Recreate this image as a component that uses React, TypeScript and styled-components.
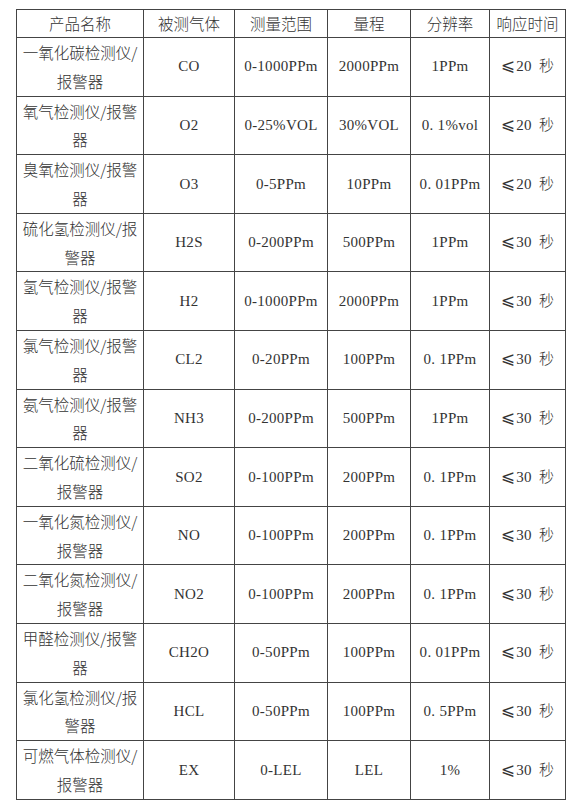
import React from "react";
import styled, { createGlobalStyle } from "styled-components";

const GlobalStyle = createGlobalStyle`
  html, body {
    margin: 0;
    padding: 0;
    background: #fff;
  }
  body {
    font-family: "Liberation Serif", "Noto Sans CJK SC", serif;
    color: #333;
  }
`;

const Page = styled.div`
  padding: 0 2px 0 16px;
  overflow: hidden;
`;

// the title sits mostly above the viewport; only its bottom edge shows
const Title = styled.p`
  margin: -18px 0 0 -8px;
  font-family: "Noto Sans CJK SC", sans-serif;
  font-size: 14px;
  font-weight: bold;
  line-height: 20px;
  color: #222;
`;

const Table = styled.table`
  margin-top: 7px;
  width: 549px;
  border-collapse: collapse;
  table-layout: fixed;
  font-size: 16px;
`;

const HeadCell = styled.th`
  border: 1px solid #444;
  padding: 0;
  height: 27px;
  line-height: 27px;
  font-weight: 300;
  font-family: "Noto Sans CJK SC", sans-serif;
  font-size: 15.5px;
  text-align: center;
  color: #333;
`;

const Cell = styled.td<{ $name?: boolean }>`
  border: 1px solid #444;
  padding: 0 1px;
  height: 57.6px;
  line-height: 28.8px;
  text-align: center;
  vertical-align: middle;
  color: #333;
  font-family: ${({ $name }) =>
    $name
      ? '"Noto Sans CJK SC", sans-serif'
      : '"Liberation Serif", "Noto Sans CJK SC", serif'};
  font-weight: ${({ $name }) => ($name ? 300 : 400)};
  font-size: ${({ $name }) => ($name ? "15.5px" : "15px")};
  letter-spacing: ${({ $name }) => ($name ? "0" : "0.3px")};
`;

const Le = styled.span`
  font-family: "DejaVu Sans", sans-serif;
  font-size: 17px;
  line-height: 1;
  margin-right: 1px;
`;

const Sec = styled.span`
  font-family: "Noto Sans CJK SC", sans-serif;
  font-weight: 300;
  line-height: 1;
  margin-left: 7px;
`;

const widths = [127, 91, 93, 83, 79, 76];
const heads = ["产品名称", "被测气体", "测量范围", "量程", "分辨率", "响应时间"];

type Row = [string, string, string, string, string, string];

const rows: Row[] = [
  ["一氧化碳检测仪/报警器", "CO", "0-1000PPm", "2000PPm", "1PPm", "20"],
  ["氧气检测仪/报警器", "O2", "0-25%VOL", "30%VOL", "0. 1%vol", "20"],
  ["臭氧检测仪/报警器", "O3", "0-5PPm", "10PPm", "0. 01PPm", "20"],
  ["硫化氢检测仪/报警器", "H2S", "0-200PPm", "500PPm", "1PPm", "30"],
  ["氢气检测仪/报警器", "H2", "0-1000PPm", "2000PPm", "1PPm", "30"],
  ["氯气检测仪/报警器", "CL2", "0-20PPm", "100PPm", "0. 1PPm", "30"],
  ["氨气检测仪/报警器", "NH3", "0-200PPm", "500PPm", "1PPm", "30"],
  ["二氧化硫检测仪/报警器", "SO2", "0-100PPm", "200PPm", "0. 1PPm", "30"],
  ["一氧化氮检测仪/报警器", "NO", "0-100PPm", "200PPm", "0. 1PPm", "30"],
  ["二氧化氮检测仪/报警器", "NO2", "0-100PPm", "200PPm", "0. 1PPm", "30"],
  ["甲醛检测仪/报警器", "CH2O", "0-50PPm", "100PPm", "0. 01PPm", "30"],
  ["氯化氢检测仪/报警器", "HCL", "0-50PPm", "100PPm", "0. 5PPm", "30"],
  ["可燃气体检测仪/报警器", "EX", "0-LEL", "LEL", "1%", "30"],
];

export default function App() {
  return (
    <Page>
      <GlobalStyle />
      <Title>二、有毒有害气体检测仪技术参数</Title>
      <Table>
        <colgroup>
          {widths.map((w, i) => (
            <col key={i} style={{ width: w }} />
          ))}
        </colgroup>
        <thead>
          <tr>
            {heads.map((h) => (
              <HeadCell key={h}>{h}</HeadCell>
            ))}
          </tr>
        </thead>
        <tbody>
          {rows.map((r) => (
            <tr key={r[0]}>
              <Cell $name>{r[0]}</Cell>
              <Cell>{r[1]}</Cell>
              <Cell>{r[2]}</Cell>
              <Cell>{r[3]}</Cell>
              <Cell>{r[4]}</Cell>
              <Cell>
                <Le>⩽</Le>
                {r[5]}
                <Sec>秒</Sec>
              </Cell>
            </tr>
          ))}
        </tbody>
      </Table>
    </Page>
  );
}
